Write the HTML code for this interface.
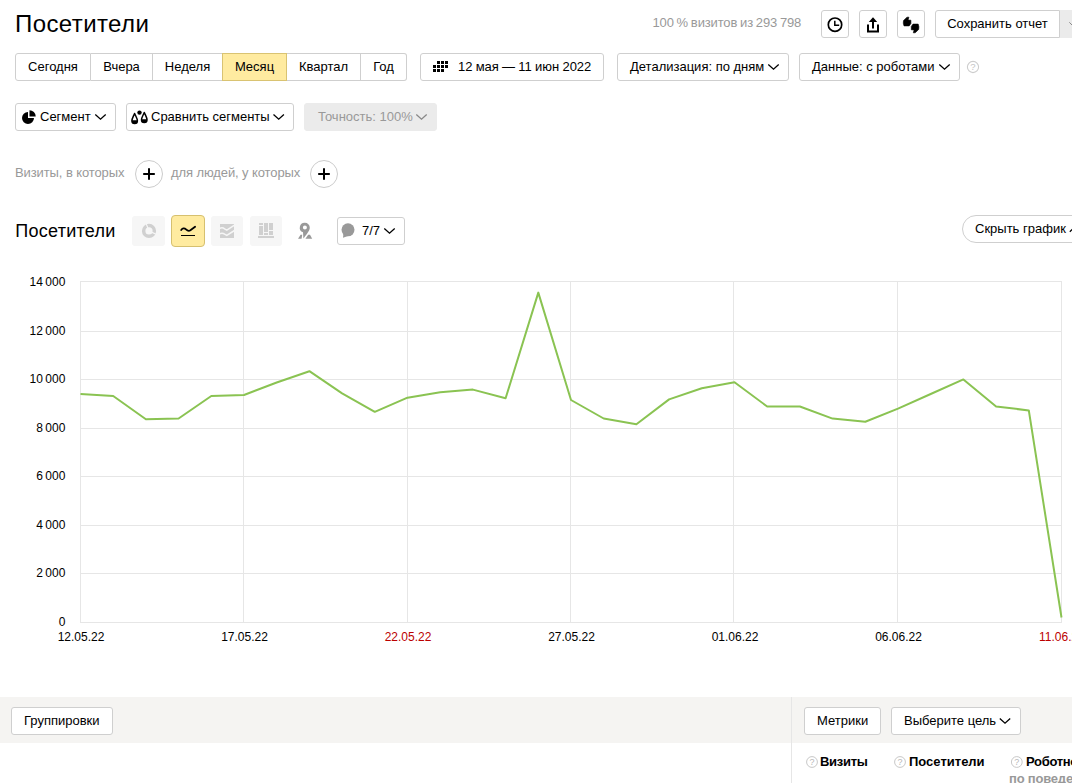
<!DOCTYPE html>
<html lang="ru">
<head>
<meta charset="utf-8">
<title>Посетители</title>
<style>
html,body{margin:0;padding:0;background:#fff;}
body{width:1072px;height:783px;position:relative;overflow:hidden;font-family:"Liberation Sans",sans-serif;font-size:13px;color:#000;}
.a{position:absolute;white-space:nowrap;}
.btn{position:absolute;box-sizing:border-box;height:28px;border:1px solid #cfcfcf;border-radius:3px;background:#fff;white-space:nowrap;font-size:13px;line-height:26px;text-align:center;color:#000;}
.ys{font-family:"Liberation Sans",sans-serif;}
.grp{position:absolute;left:15px;top:53px;height:28px;display:flex;}
.grp div{box-sizing:border-box;height:28px;border:1px solid #cfcfcf;border-left:none;line-height:26px;text-align:center;font-size:13px;background:#fff;}
.grp div:first-child{border-left:1px solid #cfcfcf;border-radius:3px 0 0 3px;}
.grp div:last-child{border-radius:0 3px 3px 0;}
.grp div.on{background:#ffeba0;border-color:#d9c372;}
.gray{color:#999;}
.circ{position:absolute;box-sizing:border-box;width:28px;height:28px;border:1px solid #ccc;border-radius:50%;background:#fff;}
.ib{position:absolute;box-sizing:border-box;width:32px;height:30px;border-radius:3px;background:#f6f6f6;}
.t13{font-size:13px;line-height:18px;}
svg{position:absolute;overflow:visible;}
</style>
</head>
<body>

<!-- title row -->
<div class="a ys" style="left:15px;top:9px;font-size:24px;line-height:30px;letter-spacing:0.4px;">Посетители</div>
<div class="a" id="t100" style="left:652.5px;top:14px;font-size:13px;line-height:18px;color:#999;letter-spacing:-0.15px;word-spacing:-0.6px;">100 % визитов из 293 798</div>

<div class="btn" style="left:821px;top:10px;width:28px;"></div>
<div class="btn" style="left:859px;top:10px;width:28px;"></div>
<div class="btn" style="left:897px;top:10px;width:28px;"></div>
<div class="btn" id="bsave" style="left:935px;top:10px;width:125px;border-radius:3px 0 0 3px;">Сохранить отчет</div>
<div class="a" style="left:1060px;top:10px;width:20px;height:28px;background:#ebebeb;"></div>

<!-- period row -->
<div class="grp">
  <div style="width:76px;">Сегодня</div>
  <div style="width:62px;">Вчера</div>
  <div style="width:70px;">Неделя</div>
  <div class="on" style="width:65px;margin-left:-1px;border-left:1px solid #d9c372;">Месяц</div>
  <div style="width:74px;">Квартал</div>
  <div style="width:46px;">Год</div>
</div>
<div class="btn" style="left:420px;top:53px;width:184px;"></div>
<div class="a t13" id="tdate" style="left:458px;top:58px;word-spacing:-0.4px;">12 мая — 11 июн 2022</div>
<div class="btn" style="left:617px;top:53px;width:172px;"></div>
<div class="a t13" id="tdet" style="left:630px;top:58px;">Детализация: по дням</div>
<div class="btn" style="left:799px;top:53px;width:161px;"></div>
<div class="a t13" id="tdan" style="left:812px;top:58px;">Данные: с роботами</div>

<!-- segment row -->
<div class="btn" style="left:15px;top:103px;width:101px;"></div>
<div class="a t13" id="tseg" style="left:40px;top:108px;">Сегмент</div>
<div class="btn" style="left:126px;top:103px;width:168px;"></div>
<div class="a t13" id="tcmp" style="left:151px;top:108px;">Сравнить сегменты</div>
<div class="btn" style="left:304px;top:103px;width:133px;background:#ebebeb;border-color:#ebebeb;"></div>
<div class="a t13" id="tacc" style="left:318px;top:108px;color:#999;">Точность: 100%</div>

<!-- filter row -->
<div class="a" id="tf1" style="left:15px;top:164px;line-height:18px;color:#999;letter-spacing:-0.1px;">Визиты, в которых</div>
<div class="circ" style="left:135px;top:160px;"></div>
<div class="a" id="tf2" style="left:171px;top:164px;line-height:18px;color:#999;letter-spacing:-0.1px;">для людей, у которых</div>
<div class="circ" style="left:310px;top:160px;"></div>

<!-- chart header -->
<div class="a ys" id="th2" style="left:15.3px;top:219px;font-size:18px;line-height:24px;letter-spacing:0.25px;">Посетители</div>
<div class="ib" style="left:132px;top:216px;width:33px;"></div>
<div class="ib" style="left:171px;top:215px;width:34px;height:32px;background:#ffeba0;border:1px solid #d6c06f;border-radius:4px;"></div>
<div class="ib" style="left:211px;top:216px;"></div>
<div class="ib" style="left:250px;top:216px;"></div>
<div class="btn" style="left:337px;top:217px;width:68px;"></div>
<div class="a t13" id="t77" style="left:362px;top:222px;">7/7</div>
<div class="btn" style="left:962px;top:215px;width:130px;border-radius:14px;"></div>
<div class="a t13" id="thide" style="left:975px;top:220px;">Скрыть график</div>

<!-- chart -->
<svg id="chart" style="left:0;top:0;" width="1072" height="783" viewBox="0 0 1072 783">
<g shape-rendering="crispEdges" stroke="#e6e6e6" stroke-width="1" fill="none">
<line x1="80" x2="1062" y1="281.5" y2="281.5"/>
<line x1="80" x2="1062" y1="331.5" y2="331.5"/>
<line x1="80" x2="1062" y1="379.5" y2="379.5"/>
<line x1="80" x2="1062" y1="428.5" y2="428.5"/>
<line x1="80" x2="1062" y1="476.5" y2="476.5"/>
<line x1="80" x2="1062" y1="525.5" y2="525.5"/>
<line x1="80" x2="1062" y1="573.5" y2="573.5"/>
<line x1="80" x2="1062" y1="622.5" y2="622.5"/>
<line x1="80.5" x2="80.5" y1="281" y2="623"/>
<line x1="243.5" x2="243.5" y1="281" y2="623"/>
<line x1="407.5" x2="407.5" y1="281" y2="623"/>
<line x1="570.5" x2="570.5" y1="281" y2="623"/>
<line x1="733.5" x2="733.5" y1="281" y2="623"/>
<line x1="897.5" x2="897.5" y1="281" y2="623"/>
<line x1="1061.5" x2="1061.5" y1="281" y2="623"/>
</g>
<polyline points="80.5,394.0 113.2,396.0 145.9,419.2 178.6,418.5 211.3,396.0 244.0,395.0 276.7,382.5 309.4,371.2 342.1,393.3 374.8,411.8 407.5,397.7 440.2,392.3 472.9,389.6 505.6,398.3 538.3,292.6 571.0,400.0 603.7,418.5 636.4,424.2 669.1,399.4 701.8,388.3 734.5,382.2 767.2,406.5 799.9,406.5 832.6,418.6 865.3,421.8 898.0,408.6 930.7,394.0 963.4,379.4 996.1,406.5 1028.8,410.4 1061.5,617.5" fill="none" stroke="#8ac352" stroke-width="2" stroke-linejoin="round" stroke-linecap="butt"/>
<g font-family="Liberation Sans, sans-serif" font-size="12" fill="#000" text-anchor="end" style="word-spacing:-0.9px">
<text x="65.4" y="286.0">14 000</text>
<text x="65.4" y="334.6">12 000</text>
<text x="65.4" y="383.1">10 000</text>
<text x="65.4" y="431.7">8 000</text>
<text x="65.4" y="480.3">6 000</text>
<text x="65.4" y="528.9">4 000</text>
<text x="65.4" y="577.4">2 000</text>
<text x="65.4" y="626.0">0</text>
</g>
<g font-family="Liberation Sans, sans-serif" font-size="12" fill="#000" text-anchor="middle">
<text x="81.0" y="641">12.05.22</text>
<text x="244.5" y="641">17.05.22</text>
<text x="408.0" y="641" fill="#bb0000">22.05.22</text>
<text x="571.5" y="641">27.05.22</text>
<text x="735.0" y="641">01.06.22</text>
<text x="898.5" y="641">06.06.22</text>
<text x="1062.0" y="641" fill="#bb0000">11.06.22</text>
</g>
</svg>

<!-- bottom -->
<div class="a" style="left:0;top:697px;width:1072px;height:46px;background:#f5f4f2;"></div>
<div class="a" style="left:791px;top:697px;width:1px;height:90px;background:#e6e6e6;"></div>
<div class="btn" style="left:11px;top:707px;width:102px;"></div>
<div class="a t13" id="tgrp" style="left:24px;top:712px;">Группировки</div>
<div class="btn" style="left:804px;top:707px;width:77px;"></div>
<div class="a t13" id="tmet" style="left:817px;top:712px;">Метрики</div>
<div class="btn" style="left:891px;top:707px;width:130px;"></div>
<div class="a t13" id="tgoal" style="left:904px;top:712px;">Выберите цель</div>
<div class="a t13" id="hv" style="left:820px;top:753px;font-weight:bold;letter-spacing:-0.3px;">Визиты</div>
<div class="a t13" id="hp" style="left:909px;top:753px;font-weight:bold;">Посетители</div>
<div class="a t13" id="hr" style="left:1026px;top:753px;font-weight:bold;letter-spacing:-0.3px;">Роботность</div>
<div class="a" id="hr2" style="left:1009px;top:770px;font-size:13px;line-height:18px;font-weight:bold;color:#999;letter-spacing:-0.2px;">по поведению</div>

<!-- icons overlay -->
<svg id="icons" style="left:0;top:0;" width="1072" height="783" viewBox="0 0 1072 783">
<!-- clock -->
<circle cx="835" cy="24.7" r="6.7" fill="none" stroke="#000" stroke-width="1.7"/>
<path d="M834.8,20.7V25.3H839.2" fill="none" stroke="#000" stroke-width="1.5"/>
<!-- share -->
<path d="M868,24.6V31.4H878V24.6" fill="none" stroke="#000" stroke-width="2"/>
<path d="M873,28.5V21" fill="none" stroke="#000" stroke-width="2"/>
<path d="M868.8,22 L873,17.3 L877.2,22Z" fill="#000"/>
<!-- thumbs -->
<path id="thumb" d="M903.5,20.6 L907,17.2 L908.9,17.2 L908.1,20.1 L910.9,20.2 L910.9,23.6 L909.2,25.9 L904,25.9 L903.3,23.2Z" fill="#000" stroke="#000" stroke-width="0.6" stroke-linejoin="round"/>
<use href="#thumb" transform="rotate(180 911.1 25)"/>
<!-- save split chevron -->
<path d="M1069.3,22.3 l3.2,3.2 l3.2,-3.2" fill="none" stroke="#8a8a8a" stroke-width="1"/>
<!-- calendar dots -->
<g fill="#000" shape-rendering="crispEdges">
<rect x="437" y="61" width="3" height="3"/><rect x="441" y="61" width="3" height="3"/><rect x="445" y="61" width="3" height="3"/>
<rect x="433" y="65" width="3" height="3"/><rect x="437" y="65" width="3" height="3"/><rect x="441" y="65" width="3" height="3"/><rect x="445" y="65" width="3" height="3"/>
<rect x="433" y="69" width="3" height="3"/><rect x="437" y="69" width="3" height="3"/><rect x="441" y="69" width="3" height="3"/>
</g>
<!-- chevrons -->
<g fill="none" stroke="#000" stroke-width="1.3">
<path d="M768.3,64.4 L773.5,69.2 L778.7,64.4"/>
<path d="M939.3,64.4 L944.5,69.2 L949.7,64.4"/>
<path d="M95.3,114.4 L100.5,119.2 L105.7,114.4"/>
<path d="M273.5,114.4 L278.7,119.2 L283.9,114.4"/>
<path d="M384.3,228.4 L389.5,233.2 L394.7,228.4"/>
<path d="M999.8,718.4 L1005,723.2 L1010.2,718.4"/>
<path d="M1069.8,231.7 L1075,226.9"/>
</g>
<path d="M416.3,114.4 L421.5,119.2 L426.7,114.4" fill="none" stroke="#888" stroke-width="1.3"/>
<!-- help ? next to Данные -->
<circle cx="973" cy="67" r="5.6" fill="none" stroke="#cdcdcd" stroke-width="1.1"/>
<text x="973" y="70.4" font-family="Liberation Sans, sans-serif" font-size="9.5" fill="#c4c4c4" text-anchor="middle">?</text>
<!-- pie (segment) -->
<path d="M28,112 A6,6 0 1 0 34,118 L28,118Z" fill="#000"/>
<path d="M29.5,110.3 A6.2,6.2 0 0 1 35.7,116.5 L29.5,116.5Z" fill="#000"/>
<!-- compare drops -->
<path d="M134.6,113.4 C133.6,116 131.9,118.6 131.9,120.7 A2.75,2.75 0 0 0 137.4,120.7 C137.4,118.6 135.6,116 134.6,113.4Z" fill="none" stroke="#000" stroke-width="1.5" stroke-linejoin="round"/>
<path d="M131.9,120.3 H137.4 V121 A2.75,2.75 0 0 1 131.9,121Z" fill="#000"/>
<path d="M144.3,112.4 C143.3,115 141.5,117.6 141.5,119.7 A2.75,2.75 0 0 0 147,119.7 C147,117.6 145.3,115 144.3,112.4Z" fill="none" stroke="#000" stroke-width="1.5" stroke-linejoin="round"/>
<path d="M141.5,119.3 H147 V120 A2.75,2.75 0 0 1 141.5,120Z" fill="#000"/>
<circle cx="139.5" cy="112.6" r="2.2" fill="#000"/>
<!-- plus signs -->
<path d="M143.2,174H154.8M149,168.2V179.8" stroke="#000" stroke-width="2" fill="none"/>
<path d="M318.2,174H329.8M324,168.2V179.8" stroke="#000" stroke-width="2" fill="none"/>
<!-- donut -->
<circle cx="149" cy="230.9" r="5.35" fill="none" stroke="#d0d0d0" stroke-width="3.5"/>
<path d="M148.1,228.6 L146,223.2 M151.5,232.1 L156.6,234.5" stroke="#f6f6f6" stroke-width="1.2" fill="none"/>
<!-- line icon -->
<path d="M181.2,230 C182.6,228.2 184.4,227.9 186,229.4 C187.6,231 188.8,231.4 190.4,230.3 L195.1,226.8" fill="none" stroke="#000" stroke-width="1.8" stroke-linecap="round"/>
<path d="M181,235.5H195" stroke="#000" stroke-width="1" fill="none" shape-rendering="crispEdges"/>
<!-- area icon -->
<rect x="220" y="224" width="14" height="14" fill="#d0d0d0"/>
<path d="M219.5,228.6 C221.5,227.4 223,227.6 224.6,228.8 L226.8,230.1 L234.5,225.2" fill="none" stroke="#f6f6f6" stroke-width="1.5"/>
<path d="M219.5,233.9 C221.5,232.7 223,232.9 224.6,234.1 L226.8,235.4 L234.5,230.5" fill="none" stroke="#f6f6f6" stroke-width="1.5"/>
<!-- columns icon -->
<g fill="#d0d0d0" shape-rendering="crispEdges">
<rect x="259" y="223" width="4" height="2"/><rect x="259" y="226" width="4" height="9"/>
<rect x="264" y="223" width="4" height="9"/><rect x="264" y="233" width="4" height="2"/>
<rect x="269" y="223" width="4" height="7"/><rect x="269" y="231" width="4" height="4"/>
<rect x="258" y="236" width="16" height="2"/>
</g>
<!-- map pin -->
<path d="M304.9,222.8 A4.9,4.9 0 0 1 309.8,227.7 C309.8,231 305.5,235.5 303.4,238.6 L303,232.3 A4.9,4.9 0 0 1 304.9,222.8Z M304.9,225.6 A2,2 0 1 0 304.9,229.6 A2,2 0 1 0 304.9,225.6Z" fill="#999" fill-rule="evenodd"/>
<path d="M298,238.7 L300.6,234.8 L302.2,234.8 L301.6,238.7Z" fill="#999"/>
<path d="M305.4,238.7 L308.2,234.8 L310,234.8 L312.2,238.7Z" fill="#999"/>
<!-- speech bubble -->
<circle cx="348" cy="229.8" r="6.5" fill="#999"/>
<path d="M343.5,233 L343,237.8 L348,236Z" fill="#999"/>
<!-- help icons in table header -->
<g fill="none" stroke="#c8c8c8" stroke-width="1">
<circle cx="812" cy="762" r="5.4"/><circle cx="900" cy="762" r="5.4"/><circle cx="1016.8" cy="762" r="5.4"/>
</g>
<g font-family="Liberation Sans, sans-serif" font-size="9" fill="#b8b8b8" text-anchor="middle">
<text x="812" y="765.2">?</text><text x="900" y="765.2">?</text><text x="1016.8" y="765.2">?</text>
</g>
</svg>

</body>
</html>
